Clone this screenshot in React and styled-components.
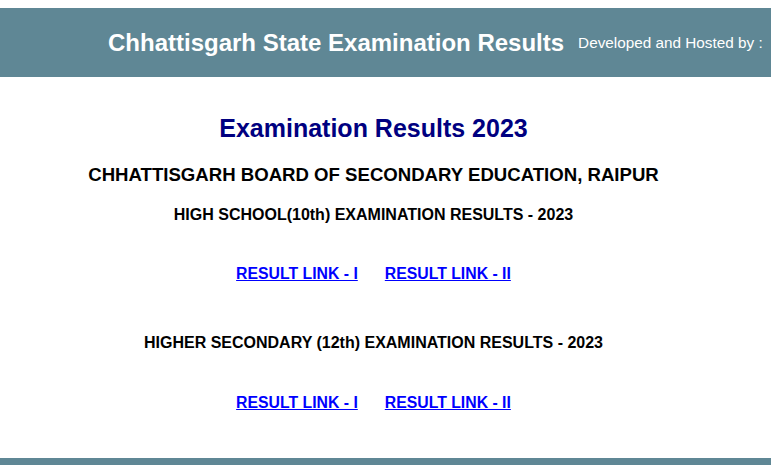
import React from 'react';
import styled, { createGlobalStyle } from 'styled-components';

const GlobalStyle = createGlobalStyle`
  html, body {
    margin: 0;
    padding: 0;
    background: #ffffff;
    overflow: hidden;
  }
  body {
    font-family: "Liberation Sans", Arial, sans-serif;
  }
`;

const Page = styled.div`
  width: 771px;
  height: 465px;
  padding-top: 8px;
  box-sizing: border-box;
  display: flex;
  flex-direction: column;
`;

const Header = styled.div`
  height: 69px;
  background: #5f8795;
  display: flex;
  align-items: center;
  padding-left: 108px;
  white-space: nowrap;
  overflow: hidden;
`;

const SiteTitle = styled.h1`
  margin: 0;
  font-size: 24px;
  font-weight: bold;
  color: #ffffff;
`;

const Hosted = styled.span`
  margin-left: 14px;
  font-size: 15.3px;
  color: #ffffff;
`;

const Main = styled.div`
  width: 747px;
  flex: 1;
  text-align: center;
  display: flex;
  flex-direction: column;
  align-items: center;
`;

const PageTitle = styled.h2`
  margin: 37px 0 0;
  font-size: 25px;
  line-height: 29px;
  font-weight: bold;
  color: #000080;
`;

const Board = styled.h3`
  margin: 21px 0 0;
  font-size: 18.6px;
  line-height: 21px;
  font-weight: bold;
  color: #000000;
`;

const Exam = styled.h4`
  margin: ${(p) => p.$top}px 0 0;
  font-size: 16px;
  line-height: 18px;
  font-weight: bold;
  color: #000000;
`;

const LinkRow = styled.div`
  margin-top: ${(p) => p.$top}px;
  display: flex;
  gap: 27px;
  line-height: 18px;
`;

const ResultLink = styled.a`
  font-size: 15.8px;
  font-weight: bold;
  color: #0000ff;
  text-decoration: underline;
`;

const Footer = styled.div`
  height: 7px;
  background: #5f8795;
`;

const sections = [
  { name: 'HIGH SCHOOL(10th) EXAMINATION RESULTS - 2023', top: 21, links: 41 },
  { name: 'HIGHER SECONDARY (12th) EXAMINATION RESULTS - 2023', top: 51, links: 42 },
];

export default function App() {
  return (
    <>
      <GlobalStyle />
      <Page>
        <Header>
          <SiteTitle>Chhattisgarh State Examination Results</SiteTitle>
          <Hosted>Developed and Hosted by :</Hosted>
        </Header>
        <Main>
          <PageTitle>Examination Results 2023</PageTitle>
          <Board>CHHATTISGARH BOARD OF SECONDARY EDUCATION, RAIPUR</Board>
          {sections.map((s) => (
            <React.Fragment key={s.name}>
              <Exam $top={s.top}>{s.name}</Exam>
              <LinkRow $top={s.links}>
                <ResultLink href="#">RESULT LINK - I</ResultLink>
                <ResultLink href="#">RESULT LINK - II</ResultLink>
              </LinkRow>
            </React.Fragment>
          ))}
        </Main>
        <Footer />
      </Page>
    </>
  );
}
